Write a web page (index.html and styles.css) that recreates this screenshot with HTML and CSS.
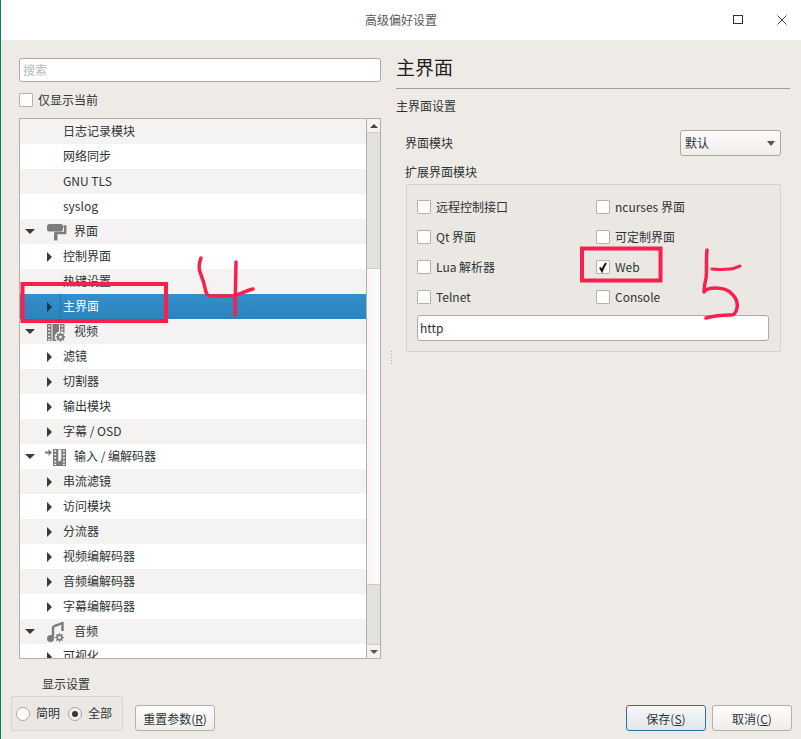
FILE: index.html
```html
<!DOCTYPE html>
<html lang="zh">
<head>
<meta charset="utf-8">
<title>高级偏好设置</title>
<link rel="stylesheet" href="styles.css">
</head>
<body>
<div class="window">
  <header class="titlebar">
    <span></span>
    <span class="title">高级偏好设置</span>
    <div class="controls">
      <svg class="ctl" width="12" height="12" viewBox="0 0 12 12"><rect x="1.500" y="1.500" width="9" height="8" fill="none" stroke="#2e3436" stroke-width="1"/></svg>
      <svg class="ctl" width="12" height="12" viewBox="0 0 12 12"><path d="M1.500 1.500l9 9M10.500 1.500l-9 9" fill="none" stroke="#3a3f41" stroke-width="1"/></svg>
    </div>
  </header>
  <main class="panes">
    <section class="left">
      <div class="search">搜索</div>
      <label class="only"><span class="check"></span><span>仅显示当前</span></label>
      <div class="tree">
        <div class="rows">
          <div class="row alt leaf">日志记录模块</div>
          <div class="row leaf">网络同步</div>
          <div class="row alt leaf">GNU TLS</div>
          <div class="row leaf">syslog</div>
          <div class="row alt group"><i class="down"></i>
            <svg class="ico" viewBox="0 0 22 20"><rect x="2" y="2" width="16" height="7.500" rx="2.500" fill="#7b7b7b"/><path d="M18.500 4.500h1.700v6.500h-9.700v6" fill="none" stroke="#7b7b7b" stroke-width="2.400"/><rect x="9" y="12" width="3.500" height="6.500" rx="1" fill="#7b7b7b"/></svg>
            <span>界面</span></div>
          <div class="row child"><i class="right"></i>控制界面</div>
          <div class="row alt leaf">热键设置</div>
          <div class="row child selected"><i class="right"></i><span class="seltext">主界面</span></div>
          <div class="row alt group"><i class="down"></i>
            <svg class="ico" viewBox="0 0 22 20"><path d="M2 2h4.500v17H2zM7.500 2h6.500v17H7.500zM15 2h4.500v17H15z" fill="#7b7b7b"/><path d="M3.200 4h2M3.200 7.500h2M3.200 11h2M3.200 14.500h2M3.200 17.800h2M16.200 4h2M16.200 7.500h2" stroke="#f5f3f1" stroke-width="1.400"/><circle cx="15.500" cy="15" r="5.800" fill="#f5f3f1"/><circle cx="15.500" cy="15" r="2.500" fill="none" stroke="#7b7b7b" stroke-width="2"/><path d="M15.500 10.200v2M15.500 17.800v2M10.700 15h2M18.300 15h2M12.100 11.600l1.400 1.400M17.500 17l1.400 1.400M18.900 11.600L17.500 13M13.500 17l-1.400 1.400" stroke="#7b7b7b" stroke-width="1.300"/></svg>
            <span>视频</span></div>
          <div class="row child"><i class="right"></i>滤镜</div>
          <div class="row alt child"><i class="right"></i>切割器</div>
          <div class="row child"><i class="right"></i>输出模块</div>
          <div class="row alt child"><i class="right"></i>字幕 / OSD</div>
          <div class="row group"><i class="down"></i>
            <svg class="ico" viewBox="0 0 22 20"><path d="M0 4.500h3.500V2L7 5.500 3.500 9V6.500H0z" fill="#7b7b7b"/><path d="M8 2h13v17H8z" fill="#7b7b7b"/><path d="M9.300 4h1.800M9.300 7.500h1.800M9.300 11h1.800M9.300 14.500h1.800M9.300 17.300h1.800M18 4h1.800M18 7.500h1.800M18 11h1.800M18 14.500h1.800M18 17.300h1.800" stroke="#fff" stroke-width="1.300"/><path d="M13.300 2.500h3v9c0 2-1 3-3 3z" fill="#fff"/></svg>
            <span>输入 / 编解码器</span></div>
          <div class="row alt child"><i class="right"></i>串流滤镜</div>
          <div class="row child"><i class="right"></i>访问模块</div>
          <div class="row alt child"><i class="right"></i>分流器</div>
          <div class="row child"><i class="right"></i>视频编解码器</div>
          <div class="row alt child"><i class="right"></i>音频编解码器</div>
          <div class="row child"><i class="right"></i>字幕编解码器</div>
          <div class="row alt group"><i class="down"></i>
            <svg class="ico" viewBox="0 0 22 20"><circle cx="5.500" cy="16.500" r="3.500" fill="#7b7b7b"/><path d="M8 16.500V5.500C8 3.800 12 3.500 17.500 1v8" fill="none" stroke="#7b7b7b" stroke-width="2.400"/><circle cx="14.500" cy="15.500" r="2.400" fill="none" stroke="#7b7b7b" stroke-width="1.800"/><path d="M14.500 11v1.700M14.500 18.300V20M10 15.500h1.700M17.300 15.500H19M11.300 12.300l1.200 1.200M16.500 17.500l1.200 1.200M17.700 12.300l-1.200 1.200M12.500 17.500l-1.200 1.200" stroke="#7b7b7b" stroke-width="1.200"/></svg>
            <span>音频</span></div>
          <div class="row child"><i class="right"></i>可视化</div>
        </div>
        <div class="scrollbar">
          <div class="sb-btn"><i class="up"></i></div>
          <div class="sb-upper"></div>
          <div class="sb-thumb"></div>
          <div class="sb-lower"></div>
          <div class="sb-btn sb-end"><i class="dn"></i></div>
        </div>
      </div>
    </section>
    <div class="handle"></div>
    <section class="right-pane">
      <h1 class="heading">主界面</h1>
      <div class="rule"></div>
      <div class="subhead">主界面设置</div>
      <div class="field">
        <span class="lift">界面模块</span>
        <div class="combo"><span class="lift">默认</span><i class="dn combo-arrow"></i></div>
      </div>
      <div class="extlabel">扩展界面模块</div>
      <div class="groupbox">
        <div class="grid">
          <label class="opt"><span class="check"></span>远程控制接口</label>
          <label class="opt"><span class="check"></span>ncurses 界面</label>
          <label class="opt"><span class="check"></span>Qt 界面</label>
          <label class="opt"><span class="check"></span>可定制界面</label>
          <label class="opt"><span class="check"></span>Lua 解析器</label>
          <label class="opt"><span class="check"><svg width="12" height="12" viewBox="0 0 12 12"><path d="M3 6.500l2 3.500c1-3 2-5 4-8" fill="none" stroke="#111" stroke-width="2"/></svg></span>Web</label>
          <label class="opt"><span class="check"></span>Telnet</label>
          <label class="opt"><span class="check"></span>Console</label>
        </div>
        <div class="textbox">http</div>
      </div>
    </section>
  </main>
  <footer class="footer">
    <div class="display">
      <div class="display-label">显示设置</div>
      <div class="display-box">
        <span class="radio"></span><span class="lift">简明</span>
        <span class="radio on"></span><span class="lift">全部</span>
      </div>
    </div>
    <button class="btn reset">重置参数(<u>R</u>)</button>
    <span class="spacer"></span>
    <button class="btn primary">保存(<u>S</u>)</button>
    <button class="btn">取消(<u>C</u>)</button>
  </footer>
  <svg class="marks" width="801" height="739" viewBox="0 0 801 739">
    <g fill="none" stroke="#fb1f4e" stroke-linecap="round" stroke-linejoin="round">
      <rect x="22.500" y="284" width="143.500" height="37" stroke-width="4" stroke-linejoin="miter"/>
      <rect x="582" y="248.500" width="78.500" height="32" stroke-width="4" stroke-linejoin="miter"/>
      <path d="M201 258c-2 5-2 11-1 14 2 5 4 10 6 20 1 4 3 4 8 4h16c8 0 14-5 23-7" stroke-width="3.500"/>
      <path d="M236 262l-1 53" stroke-width="3.500"/>
      <path d="M707 250c-1 10 0 20-1 28-1 5-2 10-2 14 2-3 6-4 11-4 7 0 13 1 17 6 4 4 6 9 5 14-1 5-3 7-6 7-9 0-18 1-25 3" stroke-width="3.500"/>
      <path d="M712 269c7 1 14 0 19 0 3 0 6-2 9-3" stroke-width="3"/>
    </g>
  </svg>
</div>
</body>
</html>
```
FILE: styles.css
```css
* { box-sizing: border-box; }
html, body { margin: 0; padding: 0; }
body {
  width: 801px;
  height: 739px;
  overflow: hidden;
  font-family: "Noto Sans CJK SC", "Noto Sans", sans-serif;
  font-size: 12px;
  color: #2e3436;
}
.window {
  position: relative;
  width: 801px;
  height: 739px;
  background: #eeebe7;
  border-left: 1px solid #0d7b70;
  display: flex;
  flex-direction: column;
}
.titlebar {
  height: 40px;
  background: #fff;
  display: grid;
  grid-template-columns: 1fr auto 1fr;
  align-items: center;
  flex: none;
}
.title { color: #55595c; line-height: 40px; }
.controls {
  display: flex;
  justify-content: flex-end;
  gap: 32px;
  padding-right: 13px;
  padding-bottom: 1px;
}
.ctl { display: block; }
.lift { margin-top: -2px; }

.panes { display: flex; height: 603px; padding: 16px 0 0 18px; flex: none; }
.left { width: 362px; flex: none; padding-top: 2px; }
.search {
  height: 24px;
  background: #fff;
  border: 1px solid #aeaba6;
  border-radius: 3px;
  padding-left: 3px;
  line-height: 21px;
  color: #b9b9b9;
}
.only { display: flex; align-items: center; height: 14px; margin-top: 11px; gap: 5px; }
.only span:last-child { margin-top: -2px; }
.check {
  width: 14px;
  height: 14px;
  flex: none;
  background: #fff;
  border: 1px solid #b6b3ae;
  border-radius: 1px;
  display: flex;
  align-items: center;
  justify-content: center;
}
.tree {
  height: 541px;
  margin-top: 11px;
  border: 1px solid #b3b0ab;
  background: #fff;
  display: flex;
  overflow: hidden;
}
.rows { width: 346px; flex: none; overflow: hidden; }
.row {
  height: 25px;
  display: flex;
  align-items: center;
  padding-bottom: 2px;
  line-height: 23px;
  white-space: nowrap;
}
.alt { background: #f5f3f1; }
.leaf { padding-left: 43px; }
.child { padding-left: 27px; }
.group { padding-left: 5px; }
.down {
  width: 0; height: 0;
  border-left: 5px solid transparent;
  border-right: 5px solid transparent;
  border-top: 5px solid #3a3a3a;
  margin-top: 2px;
  margin-right: 10px;
  flex: none;
}
.right {
  width: 0; height: 0;
  border-top: 5px solid transparent;
  border-bottom: 5px solid transparent;
  border-left: 5px solid #3a3a3a;
  margin-top: 2px;
  margin-right: 11px;
  flex: none;
}
.ico { width: 22px; height: 20px; flex: none; margin-top: 2px; margin-right: 7px; }
.selected { background: linear-gradient(#338fca, #2b83bd); color: #fff; position: relative; }
.selected .right { border-left-color: #17364d; }
.selected::before {
  content: "";
  position: absolute;
  left: 40px;
  top: 0;
  bottom: 0;
  width: 1px;
  background: #2a74a8;
}
.scrollbar {
  width: 14px;
  flex: none;
  border-left: 1px solid #b3b0ab;
  display: flex;
  flex-direction: column;
  background: #e3e1dd;
}
.sb-btn {
  height: 14px;
  background: #f4f3f1;
  border-bottom: 1px solid #cfccc7;
  display: flex;
  align-items: center;
  justify-content: center;
  flex: none;
}
.sb-end { border-bottom: 0; border-top: 1px solid #cfccc7; }
.sb-upper { height: 135px; flex: none; }
.sb-thumb {
  height: 317px;
  flex: none;
  background: linear-gradient(90deg, #f6f5f3, #fff);
  border-top: 1px solid #cfccc7;
  border-bottom: 1px solid #cfccc7;
}
.sb-lower { flex: 1; }
.up {
  width: 0; height: 0;
  border-left: 4px solid transparent;
  border-right: 4px solid transparent;
  border-bottom: 4px solid #444;
}
.dn {
  width: 0; height: 0;
  border-left: 4px solid transparent;
  border-right: 4px solid transparent;
  border-top: 4px solid #555;
}

.handle { width: 15px; flex: none; position: relative; }
.handle::after {
  content: "";
  position: absolute;
  left: 10px;
  top: 295px;
  width: 1px;
  height: 14px;
  background: repeating-linear-gradient(#b0ada8 0 1px, transparent 1px 3px);
}
.right-pane { width: 394px; flex: none; }
.heading { margin: 0; font-size: 19px; font-weight: 400; line-height: 22px; color: #1f2224; }
.rule { height: 1px; background: #a19e9a; margin-top: 10px; }
.subhead { line-height: 16px; margin-top: 9px; }
.field {
  display: flex;
  justify-content: space-between;
  align-items: center;
  height: 26px;
  margin-top: 16px;
  padding-left: 9px;
  padding-right: 9px;
}
.combo {
  width: 101px;
  height: 26px;
  background: linear-gradient(#fbfaf9, #f0eeeb);
  border: 1px solid #a9a6a1;
  border-radius: 3px;
  display: flex;
  align-items: center;
  justify-content: space-between;
  padding: 0 5px 0 4px;
}
.combo-arrow { border-left-width: 4.500px; border-right-width: 4.500px; border-top-width: 5px; }
.extlabel { line-height: 16px; margin-top: 8px; padding-left: 9px; }
.groupbox {
  width: 375px;
  height: 168px;
  margin-top: 4px;
  margin-left: 10px;
  background: #ebe8e4;
  border: 1px solid #d5d2cd;
  border-radius: 2px;
  padding: 15px 0 0 10px;
}
.grid { display: grid; grid-template-columns: 179px 170px; row-gap: 16px; }
.opt {
  display: flex;
  align-items: center;
  height: 14px;
  padding-bottom: 2px;
  gap: 5px;
  white-space: nowrap;
}
.opt .check { margin-top: 2px; }
.textbox {
  width: 352px;
  height: 26px;
  margin-top: 11px;
  background: #fff;
  border: 1px solid #aeaba6;
  border-radius: 3px;
  padding-left: 2px;
  line-height: 23px;
  color: #2e3436;
}

.footer {
  flex: 1;
  display: flex;
  align-items: flex-end;
  padding: 0 9px 8px 10px;
}
.display { width: 112px; flex: none; }
.display-label { padding-left: 31px; line-height: 16px; margin-bottom: 4px; }
.display-box {
  height: 35px;
  background: #ebe8e4;
  border: 1px solid #d8d5d0;
  border-radius: 2px;
  display: flex;
  align-items: center;
  padding-left: 4px;
}
.display-box span:nth-child(2) { margin-left: 6px; margin-right: 8px; }
.display-box span:nth-child(4) { margin-left: 6px; }
.radio {
  width: 14px;
  height: 14px;
  border-radius: 50%;
  background: #fff;
  border: 1px solid #a9a6a1;
  flex: none;
  display: flex;
  align-items: center;
  justify-content: center;
}
.radio.on { background: #f2f0ee; }
.radio.on::after {
  content: "";
  width: 6px;
  height: 6px;
  border-radius: 50%;
  background: #33383a;
}
.btn {
  width: 80px;
  height: 26px;
  font: inherit;
  color: #2e3436;
  background: linear-gradient(#fdfcfb, #efedea);
  border: 1px solid #b3b0ab;
  border-radius: 3px;
  padding: 0;
  white-space: nowrap;
}
.reset { margin-left: 12px; }
.primary {
  background: linear-gradient(#f5f8fa, #e2e6e8);
  border-color: #2a74a4;
  margin-right: 6px;
}
.spacer { flex: 1; }
.marks { position: absolute; left: -1px; top: 0; pointer-events: none; }
```
